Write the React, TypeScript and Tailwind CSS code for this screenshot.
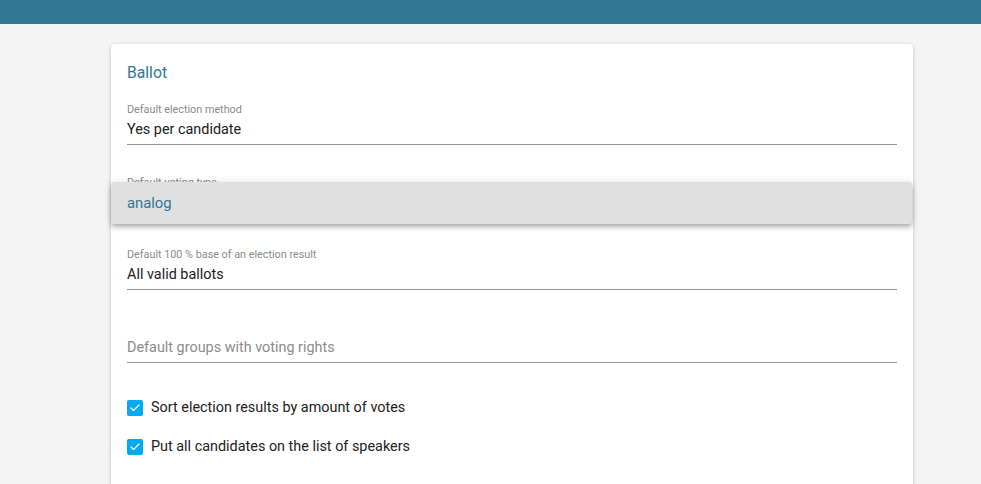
import { Check } from "lucide-react";

function Field({ label, value, placeholder }: { label?: string; value?: string; placeholder?: string }) {
  return (
    <div className="flex flex-col">
      <div className="h-4 text-[10.8px] leading-4 text-[#8a8a8a]">{label}</div>
      <div className="mt-[2px] pb-[4px] border-b border-[#949494]">
        {value ? (
          <span className="block text-[14.4px] leading-5 text-[#222]">{value}</span>
        ) : (
          <span className="block text-[14.4px] leading-5 text-[#8c8c8c]">{placeholder}</span>
        )}
      </div>
    </div>
  );
}

function CheckRow({ text }: { text: string }) {
  return (
    <label className="flex items-center gap-2 h-6">
      <span className="w-4 h-4 rounded-[2px] bg-[#03a9f4] flex items-center justify-center">
        <Check className="w-3 h-3 text-white" strokeWidth={2.5} />
      </span>
      <span className="text-[14.4px] leading-6 text-[#222]">{text}</span>
    </label>
  );
}

export default function App() {
  return (
    <div className="min-h-screen bg-[#f4f4f4] font-['Roboto',sans-serif] overflow-hidden">
      <div className="h-6 bg-[#317796]" />
      <div className="ml-[111px] mt-5 w-[802px] relative bg-white rounded shadow-[0_1px_4px_rgba(0,0,0,0.2)] px-4 pt-[17px] pb-10">
        <h2 className="text-[15.7px] leading-6 text-[#317796]">Ballot</h2>
        <div className="mt-[17px] flex flex-col gap-[29.5px]">
          <Field label="Default election method" value="Yes per candidate" />
          <Field label="Default voting type" value="analog" />
          <Field label="Default 100 % base of an election result" value="All valid ballots" />
          <Field placeholder="Default groups with voting rights" />
        </div>
        <div className="mt-[33px] flex flex-col gap-[15px]">
          <CheckRow text="Sort election results by amount of votes" />
          <CheckRow text="Put all candidates on the list of speakers" />
        </div>

        {/* open select panel */}
        <div className="absolute left-0 right-[1px] top-[138px] h-[42px] bg-[#e0e0e0] rounded-[3px] shadow-[0_2px_4px_-1px_rgba(0,0,0,0.2),0_4px_5px_0_rgba(0,0,0,0.14),0_1px_10px_0_rgba(0,0,0,0.12)] flex items-center px-4">
          <span className="text-[14.8px] text-[#317796]">analog</span>
        </div>
      </div>
    </div>
  );
}
